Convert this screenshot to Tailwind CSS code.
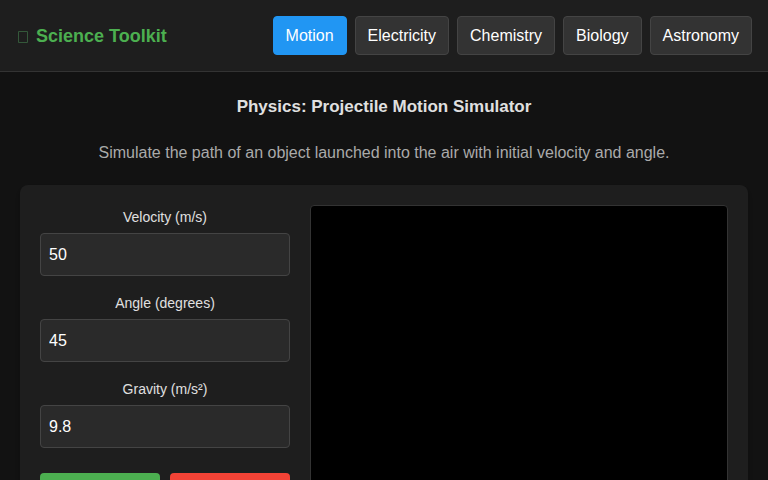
<!DOCTYPE html>
<html lang="en">
  <head>
    <meta charset="UTF-8" />
    <meta name="viewport" content="width=device-width, initial-scale=1.0" />
    <title>Science Toolkit</title>
    <script src="https://cdn.jsdelivr.net/npm/@tailwindcss/browser@4"></script>
  </head>
  <body class="min-h-screen bg-[#121212] font-['Liberation_Sans',Arial,sans-serif] text-base text-[#e0e0e0]">
    <!-- Header -->
    <header class="flex items-center justify-between border-b border-[#333] bg-[#1e1e1e] p-4">
      <div class="flex items-center gap-2 text-lg leading-8 font-bold text-[#4caf50]">
        <svg class="h-4 w-3" viewBox="0 0 12 16" fill="none" stroke="#34583a" aria-hidden="true">
          <path d="M2.5 3.5h9v11h-9z" />
        </svg>
        <h1>Science Toolkit</h1>
      </div>
      <nav class="flex gap-2">
        <button type="button" class="rounded-sm border border-[#2196f3] bg-[#2196f3] px-3 py-1.5 leading-[25px] text-white">Motion</button>
        <button type="button" class="rounded-sm border border-[#444] bg-[#333] px-3 py-1.5 leading-[25px] text-white">Electricity</button>
        <button type="button" class="rounded-sm border border-[#444] bg-[#333] px-3 py-1.5 leading-[25px] text-white">Chemistry</button>
        <button type="button" class="rounded-sm border border-[#444] bg-[#333] px-3 py-1.5 leading-[25px] text-white">Biology</button>
        <button type="button" class="rounded-sm border border-[#444] bg-[#333] px-3 py-1.5 leading-[25px] text-white">Astronomy</button>
      </nav>
    </header>

    <main class="p-5 text-center">
      <h2 class="text-[17px] leading-[29px] font-bold">Physics: Projectile Motion Simulator</h2>
      <p class="mt-5 text-[#aaa]">
        Simulate the path of an object launched into the air with initial velocity and angle.
      </p>

      <section class="mt-5 grid grid-cols-[250px_1fr] gap-5 rounded-lg bg-[#1e1e1e] p-5 shadow-md">
        <!-- Inputs -->
        <form class="flex flex-col gap-[15px]">
          <div>
            <label for="velocity" class="mb-1 block text-sm leading-6">Velocity (m/s)</label>
            <input id="velocity" type="text" value="50" class="block w-full rounded-sm border border-[#444] bg-[#2a2a2a] p-2 leading-[25px] text-white" />
          </div>
          <div>
            <label for="angle" class="mb-1 block text-sm leading-6">Angle (degrees)</label>
            <input id="angle" type="text" value="45" class="block w-full rounded-sm border border-[#444] bg-[#2a2a2a] p-2 leading-[25px] text-white" />
          </div>
          <div>
            <label for="gravity" class="mb-1 block text-sm leading-6">Gravity (m/s²)</label>
            <input id="gravity" type="text" value="9.8" class="block w-full rounded-sm border border-[#444] bg-[#2a2a2a] p-2 leading-[25px] text-white" />
          </div>
          <div class="mt-[10px] grid grid-cols-2 gap-[10px]">
            <button type="button" class="rounded-sm bg-[#4caf50] p-[10px] text-white">Launch</button>
            <button type="button" class="rounded-sm bg-[#f44336] p-[10px] text-white">Reset</button>
          </div>
        </form>

        <!-- Trajectory -->
        <canvas id="simulation" class="h-[400px] w-full rounded-sm border border-[#333] bg-black"></canvas>
      </section>
    </main>
  </body>
</html>
